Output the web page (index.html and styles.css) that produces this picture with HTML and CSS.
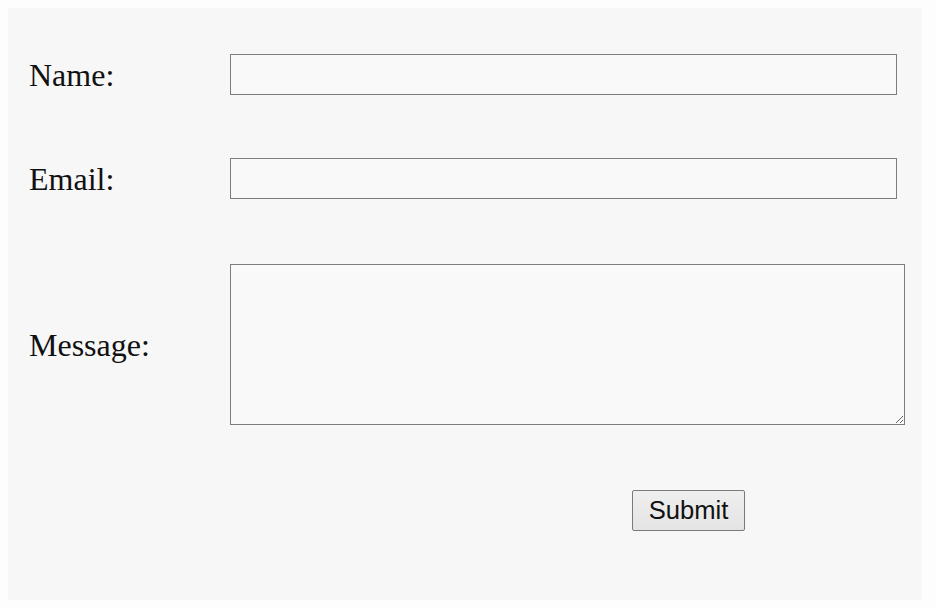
FILE: index.html
```html
<!DOCTYPE html>
<html>
<head>
<meta charset="utf-8">
<link rel="stylesheet" href="styles.css">
</head>
<body>
<div class="page">
  <form class="form">
    <div class="row row-name">
      <label class="label" for="name">Name:</label>
      <input class="field" id="name" type="text">
    </div>
    <div class="row row-email">
      <label class="label" for="email">Email:</label>
      <input class="field" id="email" type="text">
    </div>
    <div class="row row-msg">
      <label class="label" for="msg">Message:</label>
      <textarea class="area" id="msg"></textarea>
    </div>
    <div class="row row-actions">
      <button class="submit" type="button">Submit</button>
    </div>
  </form>
</div>
</body>
</html>
```
FILE: styles.css
```css
html, body {
  margin: 0;
  padding: 0;
  background: #fdfdfd;
}
body {
  padding: 8px 14px 8px 8px;
  height: 608px;
  box-sizing: border-box;
}
.page {
  background: #f7f7f7;
  height: 592px;
  box-sizing: border-box;
  padding: 46px 0 0 21px;
}
.form {
  display: flex;
  flex-direction: column;
}
.row {
  display: flex;
  align-items: center;
}
.row-name { height: 41px; margin-bottom: 63px; }
.row-email { height: 41px; margin-bottom: 65px; }
.row-msg { height: 161px; margin-bottom: 65px; }
.row-actions { height: 41px; padding-left: 603px; }
.label {
  width: 201px;
  font-family: "Liberation Serif", "Times New Roman", serif;
  font-size: 32px;
  color: #111;
  line-height: 1;
}
.field {
  box-sizing: border-box;
  width: 667px;
  height: 41px;
  margin: 0;
  border: 1px solid #7d7d7d;
  background: #f9f9f9;
  outline: none;
}
.area {
  box-sizing: border-box;
  width: 675px;
  height: 161px;
  margin: 0;
  border: 1px solid #7d7d7d;
  background: #f9f9f9;
  resize: both;
  outline: none;
}
.submit {
  box-sizing: border-box;
  width: 113px;
  height: 41px;
  margin: 0;
  padding: 0;
  font-family: "Liberation Sans", Arial, sans-serif;
  font-size: 25.6px;
  color: #111;
  background: linear-gradient(#efefef, #e4e4e4);
  border: 1px solid #7a7a7a;
  border-radius: 2px;
}
```
